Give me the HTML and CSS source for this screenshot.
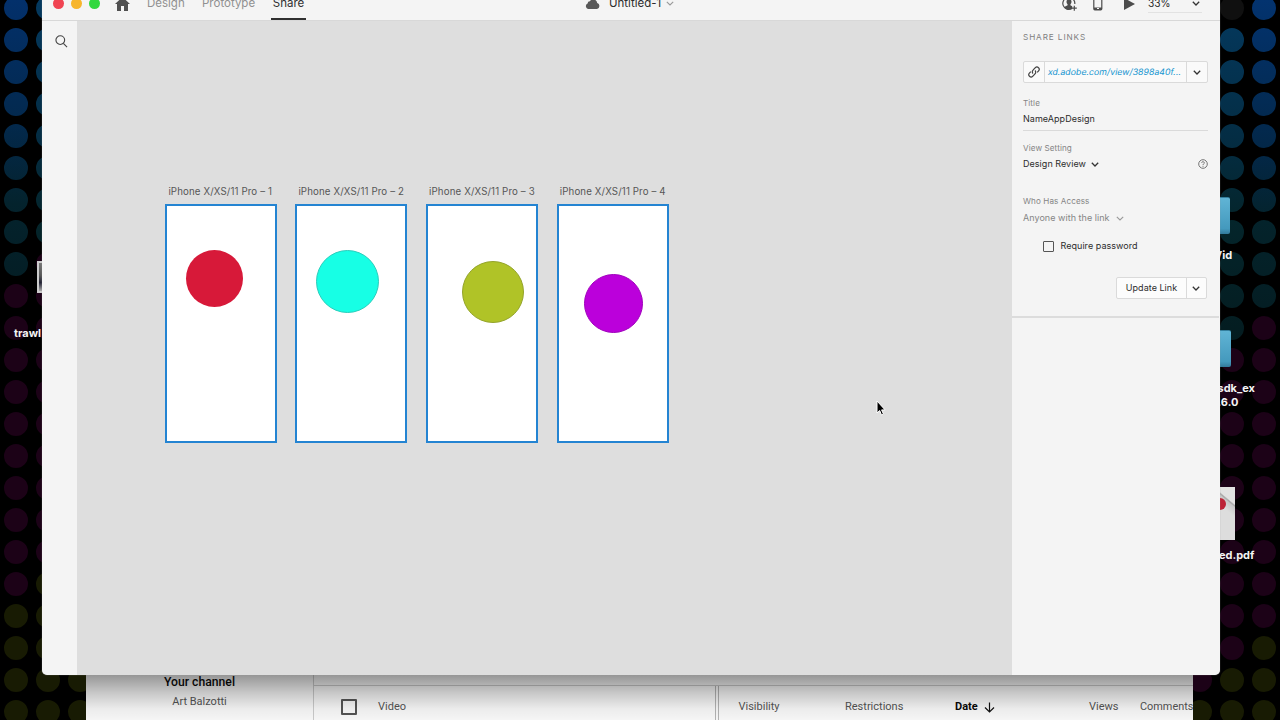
FILE: index.html
```
<!DOCTYPE html>
<html lang="en">
    <head>
        <meta charset="UTF-8">
        <meta name="viewport" content="width=device-width, initial-scale=1.0">
        <title>Untitled-1</title>
        <link rel="stylesheet" href="styles.css">
    </head>

    <body>
        <!-- wallpaper: each line is a column of round dots -->
        <svg class="wallpaper" width="1280" height="720" viewBox="0 0 1280 720">
            <defs>
                <linearGradient id="blue" gradientUnits="userSpaceOnUse" x1="0" y1="0" x2="0" y2="340">
                    <stop offset="0" stop-color="#03306b"/>
                    <stop offset="0.35" stop-color="#03294e"/>
                    <stop offset="0.6" stop-color="#04232d"/>
                    <stop offset="1" stop-color="#041a1f"/>
                </linearGradient>
                <linearGradient id="blue-right" gradientUnits="userSpaceOnUse" x1="0" y1="0" x2="0" y2="340">
                    <stop offset="0" stop-color="#03336f"/>
                    <stop offset="0.45" stop-color="#032747"/>
                    <stop offset="0.65" stop-color="#04232b"/>
                    <stop offset="1" stop-color="#041c21"/>
                </linearGradient>
                <linearGradient id="teal" gradientUnits="userSpaceOnUse" x1="0" y1="0" x2="0" y2="340">
                    <stop offset="0" stop-color="#04395f"/>
                    <stop offset="0.4" stop-color="#042d44"/>
                    <stop offset="0.65" stop-color="#04252b"/>
                    <stop offset="1" stop-color="#041c20"/>
                </linearGradient>
            </defs>
            <path class="dots" stroke="url(#blue)" d="M16 8v257"/>
            <path class="dots" stroke="url(#teal)" d="M48 8v225"/>
            <path class="dots" stroke="url(#teal)" d="M1232 40v289"/>
            <path class="dots" stroke="url(#blue-right)" d="M1264 8v289"/>
            <path class="dots gray" d="M1232 8v1"/>
            <path class="dots purple" d="M16 296v289M48 264v289M1200 680v1M1232 360v289M1264 328v289"/>
            <path class="dots olive" d="M16 616v97M48 584v129M80 680v33M1200 712v1M1232 680v33M1264 648v65"/>
        </svg>

        <div class="desktop-icon photo"></div>
        <div class="desktop-label label-trawl">trawl</div>
        <div class="desktop-icon folder folder-vid"></div>
        <div class="desktop-label label-vid">Vid</div>
        <div class="desktop-icon folder folder-sdk"></div>
        <div class="desktop-label label-sdk">sdk_ex<br>.6.0</div>
        <div class="desktop-icon pdf"><span class="pdf-dot"></span></div>
        <div class="desktop-label label-pdf">ed.pdf</div>

        <div class="studio">
            <div class="channel">
                <div class="channel-title">Your channel</div>
                <div class="channel-name">Art Balzotti</div>
            </div>
            <div class="videos">
                <div class="col-video"><span class="check-big"></span>Video</div>
                <div class="cols">
                    <span class="c-vis">Visibility</span>
                    <span class="c-res">Restrictions</span>
                    <span class="c-date">Date
                        <svg width="11" height="11" viewBox="0 0 11 11"><path d="M5.500 .5v9M1 5.500l4.500 4.500L10 5.500"/></svg>
                    </span>
                    <span class="c-views">Views</span>
                    <span class="c-com">Comments</span>
                </div>
            </div>
            <div class="studio-shade"></div>
        </div>

        <div class="window">
            <div class="toolbar">
                <div class="lights"><i class="red"></i><i class="yellow"></i><i class="green"></i></div>
                <svg class="home" width="15" height="14" viewBox="0 0 15 14"><path d="M7.500 0 0 7h2v7h4V9h3v5h4V7h2z"/></svg>
                <div class="tabs">
                    <span class="tab t-design">Design</span>
                    <span class="tab t-proto">Prototype</span>
                    <span class="tab t-share active">Share</span>
                </div>
                <div class="doc">
                    <svg width="15" height="11" viewBox="0 0 15 11"><path d="M3 11a3 3 0 0 1-.4-5.600 2.300 2.300 0 0 1 2.300-2.200A4 4 0 0 1 12.200 5 3.100 3.100 0 0 1 12 11z"/></svg>
                    <span class="doc-name">Untitled-1</span>
                    <svg class="chev light" width="8" height="5" viewBox="0 0 8 5"><path d="M.8.8 4 4 7.200.8"/></svg>
                </div>
                <div class="tools">
                    <svg class="person" width="15" height="15" viewBox="0 0 15 15">
                        <path class="line" d="M10 12.500A6 6 0 1 1 12.800 8"/>
                        <path d="M7 3.200c1.700 0 2.500 1.100 2.500 2.600 0 1.200-.5 2-1.100 2.600v.8l1.800 1v2.200C8.500 13.500 5 14 3 12l-.3-1.300 2.900-1.500v-.8C5 7.800 4.500 7 4.500 5.800c0-1.500.8-2.600 2.500-2.600z"/>
                        <path class="line" d="M12.300 9.700v5M9.800 12.200h5"/>
                    </svg>
                    <svg class="phone" width="10" height="15" viewBox="0 0 10 15"><rect class="line" x=".8" y=".8" width="8" height="13" rx="1"/><path d="M1 11.500h8V14H1z"/><path class="dot" d="M4 12h2v1H4z"/></svg>
                    <svg class="play" width="11" height="12" viewBox="0 0 11 12"><path d="M0 0v12l11-6z"/></svg>
                    <div class="zoom">33%
                        <svg class="chev" width="8" height="5" viewBox="0 0 8 5"><path d="M.8.8 4 4 7.200.8"/></svg>
                    </div>
                </div>
            </div>

            <div class="main">
                <div class="sidebar">
                    <svg width="13" height="13" viewBox="0 0 14 14"><circle cx="5.700" cy="5.500" r="4.700"/><path d="m9 9 4 4"/></svg>
                </div>

                <div class="canvas">
                    <div class="artboard a1">
                        <div class="artboard-name">iPhone X/XS/11 Pro – 1</div>
                        <div class="screen"><span class="ball"></span></div>
                    </div>
                    <div class="artboard a2">
                        <div class="artboard-name">iPhone X/XS/11 Pro – 2</div>
                        <div class="screen"><span class="ball"></span></div>
                    </div>
                    <div class="artboard a3">
                        <div class="artboard-name">iPhone X/XS/11 Pro – 3</div>
                        <div class="screen"><span class="ball"></span></div>
                    </div>
                    <div class="artboard a4">
                        <div class="artboard-name">iPhone X/XS/11 Pro – 4</div>
                        <div class="screen"><span class="ball"></span></div>
                    </div>
                </div>

                <div class="panel">
                    <div class="share">
                        <div class="heading">SHARE LINKS</div>
                        <div class="link-box">
                            <span class="link-icon">
                                <svg width="12" height="12" viewBox="0 0 12 12"><path d="M5 7.500a2.300 2.300 0 0 1 0-3.300l2.300-2.500a2.300 2.300 0 0 1 3.300 3.200L9.200 6.400M7 4.500a2.300 2.300 0 0 1 0 3.300l-2.300 2.500a2.300 2.300 0 0 1-3.300-3.200L2.800 5.600"/></svg>
                            </span>
                            <span class="link-cell"><a class="link-url">xd.adobe.com/view/3898a40f...</a></span>
                            <span class="link-drop"><svg class="chev" width="8" height="5" viewBox="0 0 8 5"><path d="M.8.8 4 4 7.200.8"/></svg></span>
                        </div>
                        <div class="label l-title">Title</div>
                        <div class="title-value">NameAppDesign</div>
                        <div class="label l-view">View Setting</div>
                        <div class="select">
                            <span class="review">Design Review</span>
                            <svg class="chev" width="8" height="5" viewBox="0 0 8 5"><path d="M.8.8 4 4 7.200.8"/></svg>
                            <svg class="help" width="10" height="10" viewBox="0 0 10 10"><circle cx="5" cy="5" r="4.300"/><path d="M3.700 4c0-1.800 2.700-1.700 2.600 0C6.300 5 5 4.900 5 6.200M5 7v.8"/></svg>
                        </div>
                        <div class="label l-access">Who Has Access</div>
                        <div class="select muted">
                            <span class="anyone">Anyone with the link</span>
                            <svg class="chev light" width="8" height="5" viewBox="0 0 8 5"><path d="M.8.8 4 4 7.200.8"/></svg>
                        </div>
                        <div class="password"><span class="check"></span><span>Require password</span></div>
                        <div class="update">
                            <span class="update-text">Update Link</span>
                            <span class="update-drop"><svg class="chev" width="8" height="5" viewBox="0 0 8 5"><path d="M.8.8 4 4 7.200.8"/></svg></span>
                        </div>
                    </div>
                </div>
            </div>
        </div>

        <svg class="cursor" width="10" height="16" viewBox="0 0 10 16"><path d="M1 1v12l2.700-2.500L5.500 15l2-.8-1.900-4.300h3.500z"/></svg>
    </body>
</html>
```
FILE: styles.css
```
* {
    box-sizing: border-box;
}
body {
    margin: 0;
    width: 1280px;
    height: 720px;
    overflow: hidden;
    position: relative;
    background-color: #000;
    font-family: Inter, "Liberation Sans", sans-serif;
    color: #2c2c2c;
    white-space: nowrap;
}
svg {
    display: block;
    flex: none;
}

/* desktop */
.wallpaper {
    position: absolute;
    left: 0;
    top: 0;
}
.dots {
    fill: none;
    stroke-width: 24;
    stroke-linecap: round;
    stroke-dasharray: 0 32;
}
.gray {
    stroke: #101010;
}
.purple {
    stroke: #1c0217;
}
.olive {
    stroke: #181b03;
}
.desktop-icon,
.desktop-label {
    position: absolute;
}
.desktop-label {
    color: #f4f4f4;
    font-size: 11px;
    line-height: 14px;
    font-weight: 700;
}
.photo {
    left: 37px;
    top: 261px;
    width: 20px;
    height: 32px;
    border: 2px solid #ccc;
    background: linear-gradient(#777, #555 45%, #223 70%, #aaa);
}
.folder {
    width: 30px;
    height: 37px;
    border-radius: 2px;
    border-top: 1px solid #347f9e;
    background: linear-gradient(#60b4d5, #4499bd 85%, #32799a);
}
.folder-vid {
    left: 1200px;
    top: 197px;
}
.folder-sdk {
    left: 1201px;
    top: 330px;
}
.pdf {
    left: 1195px;
    top: 487px;
    width: 40px;
    height: 53px;
    overflow: hidden;
    background: linear-gradient(40deg, #ddd 65%, #c8c8c8 76%, #a5a5a5 78%, #e2e2e2 80%);
}
.pdf-dot {
    position: absolute;
    left: 19px;
    top: 11px;
    width: 12px;
    height: 12px;
    border-radius: 50%;
    background-color: #bd2236;
}
.label-trawl {
    left: 14px;
    top: 326px;
}
.label-vid {
    left: 1214px;
    top: 248px;
}
.label-sdk {
    left: 1217.500px;
    top: 381px;
}
.label-pdf {
    left: 1219px;
    top: 548px;
}

/* browser window at the back */
.studio {
    position: absolute;
    left: 86px;
    top: 660px;
    width: 1107px;
    height: 60px;
    display: flex;
    overflow: hidden;
    background-color: #fafafa;
    font-family: Roboto, sans-serif;
    font-size: 11px;
    color: #555;
}
.channel {
    flex: none;
    width: 228px;
    border-right: 1px solid #ccc;
    text-align: center;
    padding-top: 15px;
}
.channel-title {
    font-size: 12.2px;
    line-height: 15px;
    font-weight: 500;
    color: #0a0a0a;
}
.channel-name {
    margin-top: 5px;
    line-height: 14px;
    font-size: 11px;
}
.videos {
    flex: none;
    width: 879px;
    display: flex;
    margin-top: 25px;
    border-top: 1px solid #ccc;
    line-height: 14px;
}
.col-video {
    flex: none;
    width: 405px;
    display: flex;
    align-items: center;
    gap: 21px;
    padding: 8px 0 0 27px;
    border-right: 4px double #b5b5b5;
}
.check-big {
    width: 16px;
    height: 16px;
    border: 2px solid #555;
    border-radius: 1px;
}
.cols {
    display: flex;
    align-items: center;
    padding: 8px 0 0 19.500px;
}
.cols span {
    flex: none;
}
.c-vis {
    width: 106.5px;
}
.c-res {
    width: 110px;
}
.c-date {
    display: flex;
    align-items: center;
    gap: 6px;
    width: 134px;
    font-weight: 700;
    color: #080808;
}
.c-date svg {
    fill: none;
    stroke: #111;
    stroke-width: 1.2;
}
.c-views {
    width: 51px;
}
.c-com {
    font-size: 10.9px;
}
.studio-shade {
    position: absolute;
    left: 0;
    right: 0;
    top: 15px;
    height: 45px;
    background: linear-gradient(rgba(0, 0, 0, 0.4), rgba(0, 0, 0, 0.2) 40%, rgba(0, 0, 0, 0.06) 75%, rgba(0, 0, 0, 0.02));
}

/* app window */
.window {
    position: relative;
    width: 1177.5px;
    height: 688.4px;
    margin: -13px 0 0 42px;
    border-radius: 5px;
    overflow: hidden;
    background-color: #f4f4f4;
    box-shadow: 0 0 1px #999;
}
.toolbar {
    height: 34px;
    display: flex;
    align-items: center;
    border-bottom: 1px solid #d8d8d8;
    font-size: 12px;
}
.lights {
    display: flex;
    gap: 7px;
    margin-left: 11px;
}
.lights i {
    width: 11px;
    height: 11px;
    border-radius: 50%;
}
.red {
    background-color: #f04452;
}
.yellow {
    background-color: #f7b52c;
}
.green {
    background-color: #32d83f;
}
.home {
    margin-left: 15px;
    fill: #505050;
}
.tabs {
    display: flex;
    align-self: stretch;
    margin-left: 17px;
    line-height: 33px;
    color: #909090;
}
.t-design {
    width: 55px;
    font-size: 11.5px;
}
.t-proto {
    width: 69px;
    font-size: 11.5px;
}
.t-share {
    width: 35px;
    text-align: center;
    font-size: 11.5px;
}
.active {
    color: #303030;
    border-bottom: 2px solid #303030;
}
.doc {
    display: flex;
    align-items: center;
    margin-left: 279px;
    fill: #585858;
    font-size: 11.5px;
}
.doc-name {
    width: 53px;
    margin: 0 4px 0 9px;
    line-height: 14px;
    padding-bottom: 1px;
}
.chev {
    fill: none;
    stroke: #333;
    stroke-width: 1.3;
}
.chev.light {
    stroke: #999;
    stroke-width: 1.1;
}
.tools {
    display: flex;
    align-items: center;
    margin-left: 388px;
    fill: #4c4c4c;
}
.tools .line {
    fill: none;
    stroke: #4c4c4c;
    stroke-width: 1.2;
}
.tools .dot {
    fill: #f4f4f4;
}
.phone {
    margin-left: 16px;
}
.play {
    margin-left: 21px;
}
.zoom {
    display: flex;
    align-items: center;
    justify-content: space-between;
    width: 54px;
    height: 18px;
    margin-left: 13px;
    padding-right: 2px;
    border-bottom: 1px solid #e2e2e2;
    font-size: 10.2px;
}
.main {
    display: flex;
    height: 655px;
}
.sidebar {
    width: 35.4px;
    padding: 14px 0 0 13px;
}
.sidebar svg {
    fill: none;
    stroke: #444;
    stroke-width: 1.2;
}
.canvas {
    width: 935.1px;
    display: flex;
    align-items: flex-start;
    padding: 163px 0 0 88px;
    background-color: #dedede;
}
.artboard {
    width: 112px;
    margin-right: 18.7px;
}
.artboard.a1 {
    width: 112px;
    margin-right: 18px;
}
.artboard-name {
    height: 20px;
    padding: 1px 0 0 3px;
    line-height: 14px;
    font-size: 9.7px;
    letter-spacing: 0.13px;
    color: #565656;
}
.screen {
    position: relative;
    height: 239px;
    border: 2px solid #2484d2;
    background-color: #fff;
}
.ball {
    position: absolute;
    border-radius: 50%;
}
.a1 .ball {
    left: 19px;
    top: 44px;
    width: 57px;
    height: 57px;
    background-color: #d71939;
}
.a2 .ball {
    left: 18.5px;
    top: 44.300px;
    width: 63px;
    height: 63px;
    background-color: #17ffe5;
    border: 1px solid #2bcdbb;
}
.a3 .ball {
    left: 33.5px;
    top: 55.400px;
    width: 62px;
    height: 62px;
    background-color: #b0c327;
    border: 1px solid #94a42b;
}
.a4 .ball {
    left: 25px;
    top: 68px;
    width: 59px;
    height: 59px;
    background-color: #bb00db;
    border: 1px solid #a000bc;
}

/* share panel */
.panel {
    width: 207px;
}
.share {
    height: 297px;
    padding: 10px 11px 0 10.500px;
    border-bottom: 2px solid #dcdcdc;
    font-size: 9px;
    letter-spacing: 0.04px;
    line-height: 12px;
}
.heading {
    font-size: 8.2px;
    letter-spacing: 0.9px;
    color: #808080;
}
.link-box {
    display: flex;
    height: 22px;
    margin-top: 18px;
    border: 1px solid #dadada;
    border-radius: 2px;
    background-color: #fafafa;
}
.link-icon,
.link-drop {
    display: flex;
    align-items: center;
    justify-content: center;
    width: 20px;
}
.link-icon svg {
    fill: none;
    stroke: #444;
    stroke-width: 1.2;
}
.link-cell {
    flex: 1;
    border: 1px solid #dadada;
    border-width: 0 1px;
    padding-left: 3.5px;
    line-height: 19px;
}
/* slanted roman, keeps the two-storey a */
.link-url {
    display: inline-block;
    transform: skewX(-10deg);
    font-size: 8.8px;
    letter-spacing: 0;
    color: #1695d0;
}
.label {
    font-size: 8.1px;
    letter-spacing: 0.1px;
    color: #858585;
}
.l-title {
    margin-top: 14px;
}
.title-value {
    height: 22px;
    padding-top: 4px;
    border-bottom: 1px solid #dadada;
}
.l-view {
    margin-top: 11px;
}
.select {
    display: flex;
    align-items: center;
    margin-top: 4px;
}
.review {
    width: 68px;
}
.help {
    margin-left: auto;
    fill: none;
    stroke: #666;
    stroke-width: 0.9;
}
.l-access {
    margin-top: 25px;
}
.select.muted {
    margin-top: 5px;
    color: #858585;
}
.anyone {
    width: 93px;
}
.password {
    display: flex;
    align-items: center;
    gap: 6px;
    margin: 16px 0 0 20.500px;
}
.check {
    width: 11px;
    height: 11px;
    border: 1px solid #555;
    border-radius: 1px;
}
.update {
    display: flex;
    width: 91px;
    height: 22px;
    margin: 25px 0 0 93px;
    border: 1px solid #dadada;
    border-radius: 2px;
    background-color: #fcfcfc;
}
.update-text {
    width: 70px;
    line-height: 19px;
    text-align: center;
    border-right: 1px solid #dadada;
}
.update-drop {
    display: flex;
    flex: 1;
    align-items: center;
    justify-content: center;
}

.cursor {
    position: absolute;
    left: 876px;
    top: 400px;
    fill: #000;
    stroke: #fff;
    stroke-width: 1;
}
```
